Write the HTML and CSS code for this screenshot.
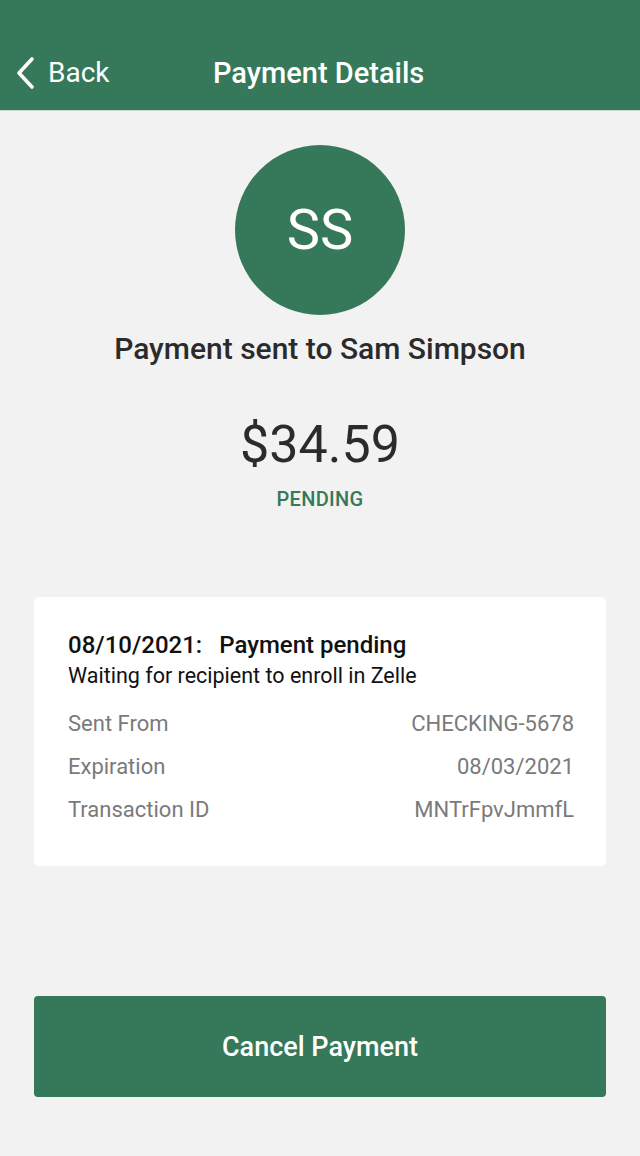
FILE: index.html
```html
<!DOCTYPE html>
<html lang="en">
<head>
  <meta charset="UTF-8">
  <meta name="viewport" content="width=device-width, initial-scale=1">
  <title>Payment Details</title>
  <link rel="stylesheet" href="styles.css">
</head>
<body>
  <div class="screen">
    <!-- HEADER -->
    <div class="topbar">
      <div class="back">
        <svg class="chev" width="22" height="34" viewBox="0 0 22 34">
          <path d="M18 3 L5 17 L18 31" fill="none" stroke="#fff" stroke-width="3.6" stroke-linecap="round" stroke-linejoin="round"/>
        </svg>
        <span>Back</span>
      </div>
      <h1>Payment Details</h1>
    </div>

    <!-- SUMMARY -->
    <div class="summary">
      <div class="avatar">SS</div>
      <h2>Payment sent to Sam Simpson</h2>
      <div class="amount">$34.59</div>
      <div class="status">PENDING</div>
    </div>

    <!-- DETAILS CARD -->
    <div class="card">
      <div class="card-title"><span class="date">08/10/2021:</span>Payment pending</div>
      <div class="card-sub">Waiting for recipient to enroll in Zelle</div>
      <div class="rows">
        <div class="row"><span>Sent From</span><span>CHECKING-5678</span></div>
        <div class="row"><span>Expiration</span><span>08/03/2021</span></div>
        <div class="row"><span>Transaction ID</span><span>MNTrFpvJmmfL</span></div>
      </div>
    </div>

    <div class="actions">
      <button class="btn">Cancel Payment</button>
    </div>
  </div>
</body>
</html>
```

FILE: styles.css
```css
* {
  padding: 0;
  margin: 0;
  box-sizing: border-box;
  font-family: Roboto, "Liberation Sans", sans-serif;
}
body {
  background: #f2f2f2;
  width: 640px;
  height: 1156px;
}
.screen {
  display: flex;
  flex-direction: column;
}

.topbar {
  height: 111px;
  background: #35785a;
  border-bottom: 1px solid #c9d6cf;
  display: flex;
  align-items: flex-end;
  padding: 0 0 20px 14px;
  color: #fff;
}
.back {
  display: flex;
  align-items: center;
  width: 199px;
  gap: 12px;
}
.back span {
  font-size: 28px;
  line-height: 34px;
}
.topbar h1 {
  font-size: 29px;
  font-weight: 500;
  line-height: 34px;
}

.summary {
  display: flex;
  flex-direction: column;
  align-items: center;
  padding-top: 34px;
}
.avatar {
  width: 170px;
  height: 170px;
  border-radius: 50%;
  background: #35785a;
  color: #fff;
  font-size: 56px;
  display: flex;
  align-items: center;
  justify-content: center;
}
.summary h2 {
  margin-top: 17px;
  font-size: 30px;
  font-weight: 500;
  color: #2b2b2b;
  line-height: 34px;
}
.amount {
  margin-top: 49px;
  font-size: 52px;
  color: #2b2b2b;
  line-height: 60px;
}
.status {
  margin-top: 12px;
  font-size: 20px;
  font-weight: 500;
  color: #35785a;
  letter-spacing: 0.3px;
}

.card {
  margin: 86px 34px 0;
  background: #fff;
  border-radius: 5px;
  padding: 33px 32px 35px 34px;
}
.card-title {
  font-size: 24px;
  font-weight: 500;
  color: #111;
  line-height: 30px;
}
.card-title .date {
  margin-right: 17px;
}
.card-sub {
  font-size: 21.5px;
  color: #111;
  line-height: 32px;
}
.rows {
  margin-top: 10px;
}
.row {
  display: flex;
  justify-content: space-between;
  font-size: 22px;
  color: #7a7a7a;
  line-height: 43px;
}

.actions {
  padding: 130px 34px 0;
}
.btn {
  width: 100%;
  height: 101px;
  border: none;
  border-radius: 4px;
  background: #35785a;
  color: #fff;
  font-size: 27px;
  font-weight: 500;
}
```
